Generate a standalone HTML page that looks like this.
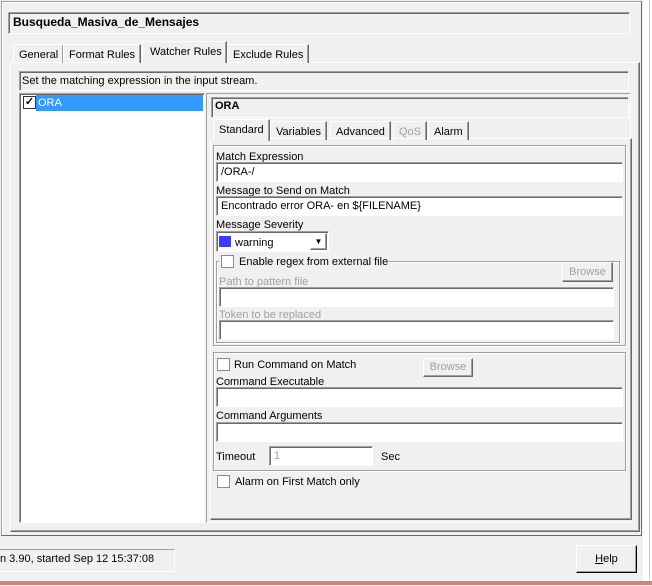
<!DOCTYPE html>
<html><head><style>
*{box-sizing:border-box;margin:0;padding:0}
body{width:652px;height:586px;background:#f0f0f0;font-family:"Liberation Sans",Arial,sans-serif;font-size:11px;color:#000;position:relative;overflow:hidden}
.a{position:absolute}
.sunk{border:1px solid;border-color:#a0a0a0 #fff #fff #a0a0a0;box-shadow:inset 1px 1px 0 #696969}
.inp{position:absolute;background:#fff;border:1px solid;border-color:#a0a0a0 #fff #fff #a0a0a0;box-shadow:inset 1px 1px 0 #696969;padding:3px 4px 0;font-size:11px}
.grp{position:absolute;border:1px solid #a0a0a0;box-shadow:1px 1px 0 #fff inset,1px 1px 0 #fff}
.tab{position:absolute;height:19px;padding:4px 5px 0;border-top:1px solid #fff;border-left:1px solid #fff;border-right:1px solid #696969;box-shadow:inset -1px 0 0 #a0a0a0;font-size:11px;white-space:nowrap}
.tab.sel{height:22px;border:none;border-top:1px solid #fff;border-left:1px solid #fff;border-right:1px solid #696969;background:#f0f0f0;z-index:2}
.panel{position:absolute;border:1px solid;border-color:#fff #696969 #696969 #fff;box-shadow:inset -1px -1px 0 #a0a0a0}
.lbl{position:absolute;font-size:11px;white-space:nowrap;margin-top:1px}
.cb{position:absolute;width:13px;height:13px;background:#fff;border:1px solid #8a8a8a}
.btn{position:absolute;border:1px solid;border-color:#fff #696969 #696969 #fff;box-shadow:inset -1px -1px 0 #a0a0a0;text-align:center;font-size:11px}
.dis{color:#a0a0a0}
</style></head><body>
<div class="a" style="left:1px;top:1px;width:641px;height:535px;border:1px solid;border-color:#a0a0a0 #696969 #696969 #a0a0a0;box-shadow:inset 1px 1px 0 #fff"></div>
<div class="a" style="left:643px;top:0;width:9px;height:586px;background:#fff"></div>
<div class="a" style="left:649px;top:0;width:1px;height:580px;background:#e0c0c0"></div>
<div class="a sunk" style="left:8px;top:12px;width:622px;height:22px"></div>
<div class="lbl" style="left:13px;top:14px;font-weight:bold;font-size:12px">Busqueda_Masiva_de_Mensajes</div>

<div class="panel" style="left:10px;top:62px;width:630px;height:470px"></div>
<div class="tab" style="left:13px;top:44px">General</div>
<div class="tab" style="left:63px;top:44px">Format Rules</div>
<div class="tab sel" style="left:142px;top:41px;width:85px;padding:4px 7px 0">Watcher Rules</div>
<div class="tab" style="left:227px;top:44px">Exclude Rules</div>

<div class="a sunk" style="left:19px;top:71px;width:610px;height:20px"></div>
<div class="lbl" style="left:22px;top:74px">Set the matching expression in the input stream.</div>

<div class="a sunk" style="left:19px;top:93px;width:186px;height:430px;background:#fff"></div>
<div class="a" style="left:36px;top:95px;width:167px;height:16px;background:#3399ff"></div>
<div class="lbl" style="left:38px;top:96px;color:#fff">ORA</div>
<div class="cb" style="left:23px;top:96px;font-size:11px;line-height:11px;text-align:center;font-weight:bold;border-color:#333">✓</div>

<div class="a" style="left:206px;top:93px;width:425px;height:430px;border:1px solid;border-color:#a0a0a0 #fff #fff #a0a0a0"></div>
<div class="a sunk" style="left:211px;top:97px;width:418px;height:21px"></div>
<div class="lbl" style="left:215px;top:99px;font-weight:bold">ORA</div>

<div class="panel" style="left:210px;top:138px;width:422px;height:382px"></div>
<div class="tab sel" style="left:213px;top:119px;width:57px">Standard</div>
<div class="tab" style="left:270px;top:121px">Variables</div>
<div class="tab" style="left:330px;top:121px">Advanced</div>
<div class="tab dis" style="left:393px;top:121px">QoS</div>
<div class="tab" style="left:428px;top:121px">Alarm</div>

<div class="grp" style="left:213px;top:145px;width:413px;height:201px"></div>
<div class="lbl" style="left:216px;top:150px">Match Expression</div>
<div class="inp" style="left:216px;top:162px;width:407px;height:20px">/ORA-/</div>
<div class="lbl" style="left:216px;top:184px">Message to Send on Match</div>
<div class="inp" style="left:216px;top:196px;width:407px;height:20px">Encontrado error ORA- en ${FILENAME}</div>
<div class="lbl" style="left:216px;top:218px">Message Severity</div>
<div class="inp" style="left:216px;top:231px;width:113px;height:21px;padding:0"></div>
<div class="a" style="left:219px;top:236px;width:12px;height:11px;background:#3c3cff"></div>
<div class="lbl" style="left:235px;top:236px">warning</div>
<div class="btn" style="left:310px;top:233px;width:17px;height:17px;font-size:8px;line-height:15px">▼</div>

<div class="grp" style="left:216px;top:261px;width:404px;height:82px"></div>
<div class="a" style="left:219px;top:254px;width:170px;height:14px;background:#f0f0f0"></div>
<div class="cb" style="left:221px;top:255px"></div>
<div class="lbl" style="left:239px;top:255px">Enable regex from external file</div>
<div class="btn dis" style="left:562px;top:262px;width:51px;height:20px;line-height:18px">Browse</div>
<div class="lbl dis" style="left:219px;top:275px">Path to pattern file</div>
<div class="inp" style="left:219px;top:287px;width:395px;height:20px"></div>
<div class="lbl dis" style="left:219px;top:308px">Token to be replaced</div>
<div class="inp" style="left:219px;top:320px;width:395px;height:20px"></div>

<div class="grp" style="left:213px;top:352px;width:413px;height:119px"></div>
<div class="cb" style="left:217px;top:358px"></div>
<div class="lbl" style="left:234px;top:358px">Run Command on Match</div>
<div class="btn dis" style="left:423px;top:358px;width:50px;height:19px;line-height:17px">Browse</div>
<div class="lbl" style="left:216px;top:375px">Command Executable</div>
<div class="inp" style="left:216px;top:387px;width:407px;height:20px"></div>
<div class="lbl" style="left:216px;top:409px">Command Arguments</div>
<div class="inp" style="left:216px;top:422px;width:407px;height:20px"></div>
<div class="lbl" style="left:216px;top:450px">Timeout</div>
<div class="inp dis" style="left:269px;top:446px;width:104px;height:20px">1</div>
<div class="lbl" style="left:381px;top:450px">Sec</div>

<div class="cb" style="left:217px;top:475px"></div>
<div class="lbl" style="left:235px;top:475px">Alarm on First Match only</div>

<div class="a sunk" style="left:-2px;top:549px;width:177px;height:23px;box-shadow:none"></div>
<div class="lbl" style="left:0;top:552px">n 3.90, started Sep 12 15:37:08</div>
<div class="btn" style="left:576px;top:545px;width:61px;height:28px;line-height:26px;border-color:#fff #000 #000 #fff"><u>H</u>elp</div>

<div class="a" style="left:0;top:581px;width:652px;height:4px;background:#d48080"></div>
<div class="a" style="left:0;top:585px;width:652px;height:1px;background:#fff"></div>
</body></html>
